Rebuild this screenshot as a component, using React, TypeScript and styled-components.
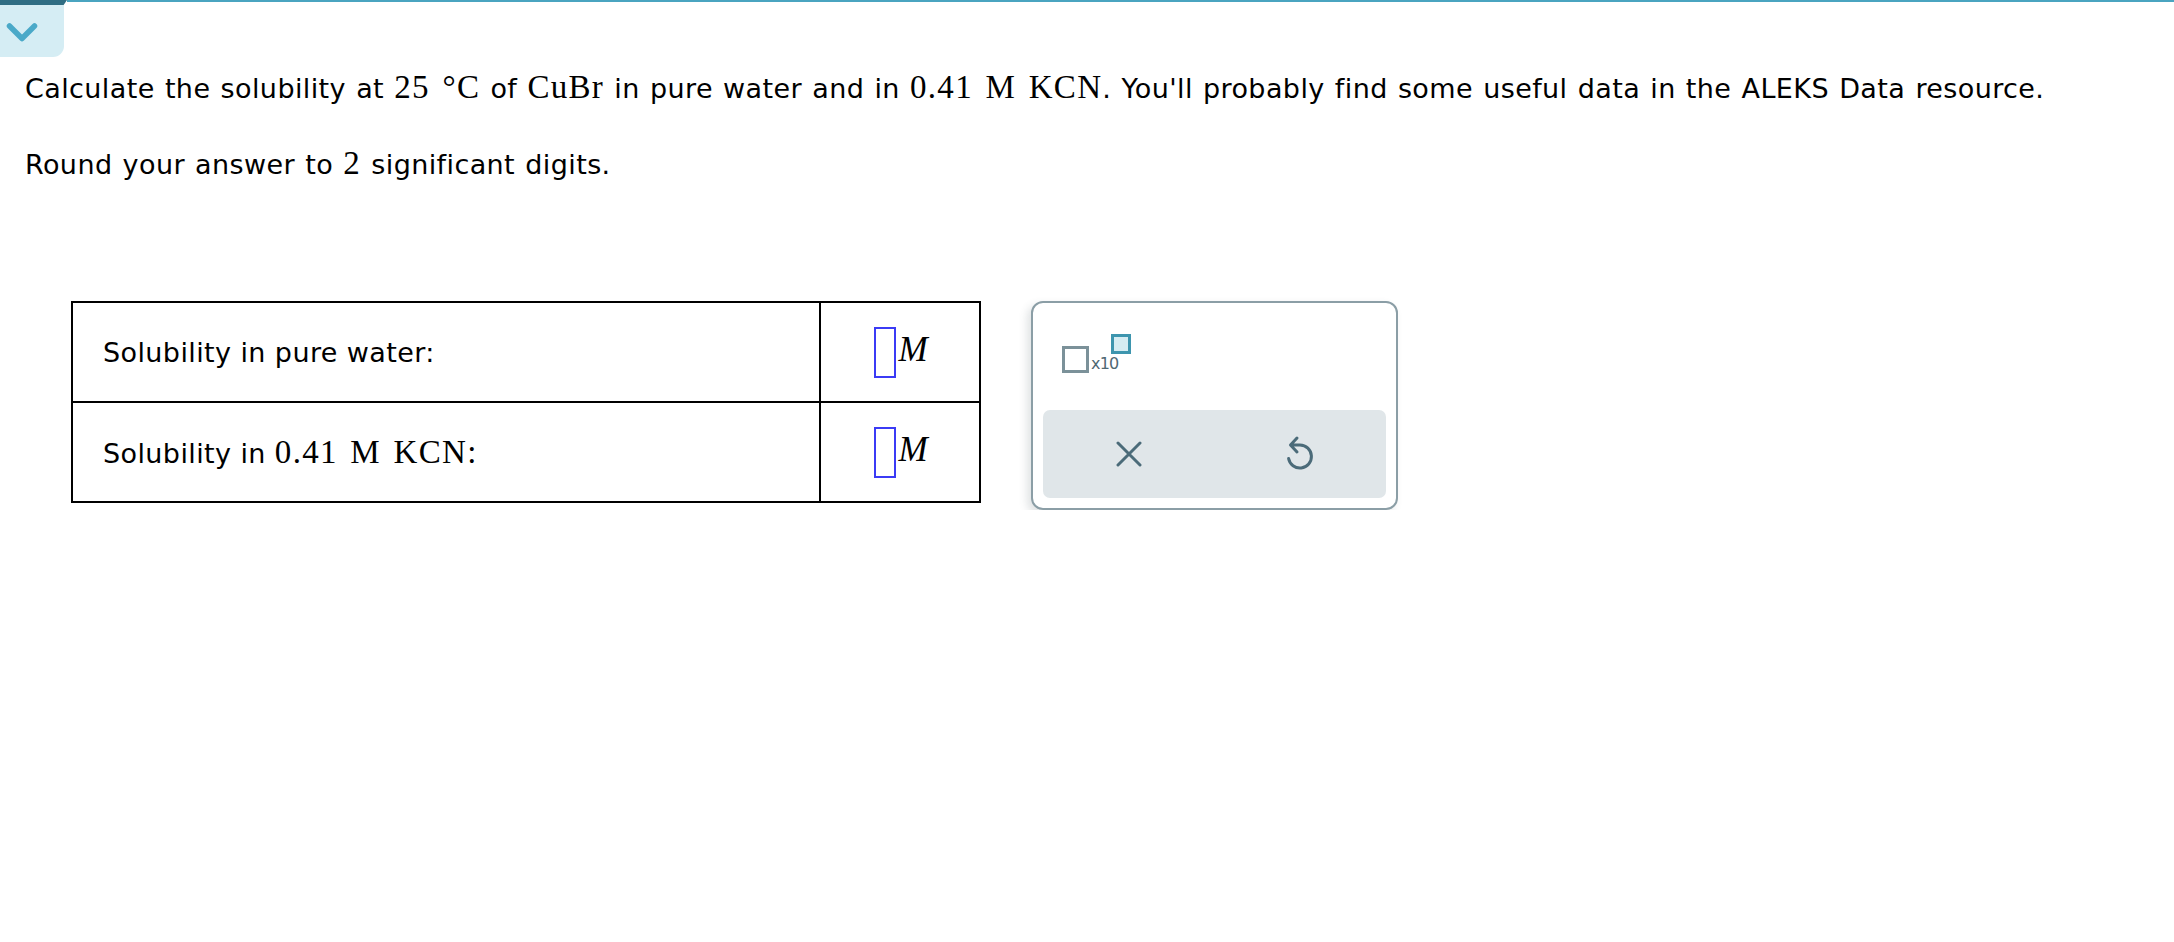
import styled, { createGlobalStyle } from "styled-components";

const GlobalStyle = createGlobalStyle`
  html, body {
    margin: 0;
    padding: 0;
    background: #ffffff;
  }
  body {
    font-family: "DejaVu Sans", Verdana, sans-serif;
    color: #000;
  }
`;

const Header = styled.div`
  display: flex;
  align-items: flex-start;
`;

const Tab = styled.div`
  width: 67px;
  display: flex;
  flex-direction: column;
`;

const TabStrip = styled.div`
  height: 5px;
  background: #2f6d83;
  clip-path: polygon(0 0, 100% 0, 95% 100%, 0 100%);
`;

const TabBody = styled.button`
  width: 64px;
  height: 52px;
  border: none;
  padding: 17px 0 0 6px;
  background: #d5edf4;
  border-bottom-right-radius: 11px;
  display: flex;
  align-items: flex-start;
  cursor: pointer;
`;

const Rule = styled.div`
  flex: 1;
  height: 2px;
  background: #4aa4c0;
`;

const Content = styled.div`
  padding: 0 0 0 25px;
`;

const Para = styled.p<{ $top: number }>`
  margin: ${(p) => p.$top}px 0 0 0;
  font-size: 27px;
  line-height: 32px;
  letter-spacing: 0.4px;
  word-spacing: 1.2px;
  white-space: nowrap;
`;

const Math = styled.span`
  font-family: "Liberation Serif", "Times New Roman", serif;
  font-size: 33px;
  letter-spacing: 1.3px;
  word-spacing: 3px;
`;

const Workspace = styled.div`
  display: flex;
  align-items: flex-start;
  gap: 50px;
  margin: 120px 0 0 46px;
`;

const AnswerTable = styled.table`
  border-collapse: collapse;
  border: 2px solid #000;
`;

const Row = styled.tr`
  height: 100px;
`;

const LabelCell = styled.td`
  width: 748px;
  box-sizing: border-box;
  border: 2px solid #000;
  padding: 0 0 0 30px;
  font-size: 27px;
  letter-spacing: 0.4px;
  vertical-align: middle;
`;

const InputCell = styled.td`
  width: 160px;
  box-sizing: border-box;
  border: 2px solid #000;
  padding: 0;
  vertical-align: middle;
`;

const InputWrap = styled.div`
  display: flex;
  justify-content: center;
  align-items: flex-end;
  padding-left: 2px;
`;

const Blank = styled.div`
  width: 22px;
  height: 51px;
  box-sizing: border-box;
  border: 2px solid #3b3bf5;
`;

const Unit = styled.span`
  font-family: "Liberation Serif", "Times New Roman", serif;
  font-style: italic;
  font-size: 35px;
  line-height: 35px;
  margin: 0 0 11px 2px;
`;

const Palette = styled.div`
  width: 367px;
  height: 209px;
  box-sizing: border-box;
  border: 2px solid #8b9ea6;
  border-radius: 12px;
  padding: 10px;
  display: flex;
  flex-direction: column;
  box-shadow: -4px 4px 9px rgba(60, 80, 90, 0.16);
  background: #fff;
`;

const PaletteTop = styled.div`
  flex: 1;
  padding: 21px 0 0 19px;
`;

const SciButton = styled.button`
  display: inline-flex;
  align-items: flex-start;
  border: none;
  background: none;
  padding: 0;
  cursor: pointer;
`;

const BaseBox = styled.span`
  margin-top: 12px;
  width: 27px;
  height: 27px;
  box-sizing: border-box;
  border: 3px solid #7b9199;
`;

const Times = styled.span`
  margin: 20px 0 0 2px;
  font-family: "DejaVu Sans", Verdana, sans-serif;
  font-size: 16px;
  letter-spacing: -0.8px;
  color: #4f6873;
`;

const SupBox = styled.span`
  margin-left: -7px;
  width: 20px;
  height: 20px;
  box-sizing: border-box;
  border: 3px solid #3d95ae;
  background: #d5ecf2;
`;

const ButtonRow = styled.div`
  height: 88px;
  border-radius: 7px;
  background: #e0e6e9;
  display: grid;
  grid-template-columns: 1fr 1fr;
`;

const IconButton = styled.button`
  border: none;
  background: none;
  display: flex;
  align-items: center;
  justify-content: center;
  cursor: pointer;
  padding: 0;
`;

const Chevron = () => (
  <svg width="32" height="22" viewBox="0 0 32 22">
    <path
      d="M3.5 4 L16 16.5 L28.5 4"
      fill="none"
      stroke="#4aa9c8"
      strokeWidth="5.5"
      strokeLinecap="round"
      strokeLinejoin="round"
    />
  </svg>
);

const CloseIcon = () => (
  <svg width="26" height="26" viewBox="0 0 26 26">
    <path
      d="M2 2 L24 24 M24 2 L2 24"
      stroke="#4b6b79"
      strokeWidth="3"
      strokeLinecap="round"
    />
  </svg>
);

const UndoIcon = () => (
  <svg width="28" height="36" viewBox="0 0 28 36" style={{ marginTop: -2 }}>
    <path
      d="M14 10 A11.5 11.5 0 1 1 2.6 23.5 M14 10 H5 M11 3 L4.5 10 L11 17"
      fill="none"
      stroke="#4b6b79"
      strokeWidth="3"
      strokeLinecap="round"
      strokeLinejoin="round"
    />
  </svg>
);

export default function App() {
  return (
    <>
      <GlobalStyle />
      <Header>
        <Tab>
          <TabStrip />
          <TabBody aria-label="collapse">
            <Chevron />
          </TabBody>
        </Tab>
        <Rule />
      </Header>
      <Content>
        <Para $top={14}>
          Calculate the solubility at <Math>25 °C</Math> of <Math>CuBr</Math> in pure water and in{" "}
          <Math>0.41 M KCN</Math>. You'll probably find some useful data in the ALEKS Data resource.
        </Para>
        <Para $top={42}>
          Round your answer to <Math>2</Math> significant digits.
        </Para>
        <Workspace>
          <AnswerTable>
            <tbody>
              <Row>
                <LabelCell>Solubility in pure water:</LabelCell>
                <InputCell>
                  <InputWrap>
                    <Blank />
                    <Unit>M</Unit>
                  </InputWrap>
                </InputCell>
              </Row>
              <Row>
                <LabelCell>
                  Solubility in <Math>0.41 M KCN:</Math>
                </LabelCell>
                <InputCell>
                  <InputWrap>
                    <Blank />
                    <Unit>M</Unit>
                  </InputWrap>
                </InputCell>
              </Row>
            </tbody>
          </AnswerTable>
          <Palette>
            <PaletteTop>
              <SciButton aria-label="scientific notation">
                <BaseBox />
                <Times>x10</Times>
                <SupBox />
              </SciButton>
            </PaletteTop>
            <ButtonRow>
              <IconButton aria-label="clear">
                <CloseIcon />
              </IconButton>
              <IconButton aria-label="undo">
                <UndoIcon />
              </IconButton>
            </ButtonRow>
          </Palette>
        </Workspace>
      </Content>
    </>
  );
}
